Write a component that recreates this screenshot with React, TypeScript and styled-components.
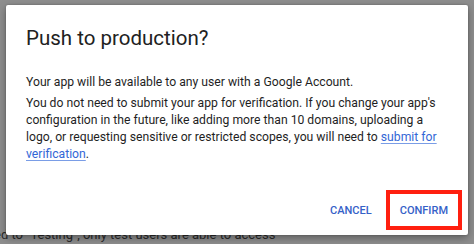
import styled, { createGlobalStyle } from 'styled-components';

const GlobalStyle = createGlobalStyle`
  html, body {
    margin: 0;
    padding: 0;
    background: #8e8e8e;
  }
  body {
    font-family: Roboto, "Liberation Sans", Arial, sans-serif;
  }
`;

const Page = styled.div`
  position: relative;
  width: 474px;
  height: 244px;
  overflow: hidden;
  background: #8e8e8e;
`;

const UnderText = styled.div`
  padding-top: 226px;
  margin-left: -6px;
  font-size: 13px;
  line-height: 17px;
  color: #2a2a2a;
  white-space: nowrap;
`;

const Dialog = styled.div`
  position: absolute;
  top: 5px;
  left: 6px;
  width: 462px;
  height: 230px;
  box-sizing: border-box;
  display: flex;
  flex-direction: column;
  background: #ffffff;
  border-radius: 2px;
  box-shadow: 0 3px 8px rgba(0, 0, 0, 0.35), 0 0 2px rgba(0, 0, 0, 0.25);
`;

const Content = styled.div`
  padding: 20px 20px 0 20px;
`;

const Title = styled.h2`
  margin: 0 0 23px 0;
  font-size: 20.5px;
  line-height: 26px;
  font-weight: 400;
  color: #212121;
`;

const Paragraph = styled.p`
  margin: 0 0 4px 0;
  font-size: 12.2px;
  line-height: 17px;
  color: #1f1f1f;
`;

const Link = styled.a`
  color: #3367d6;
  text-decoration: underline;
  text-decoration-color: #7a9de6;
  text-underline-offset: 2px;
`;

const Actions = styled.div`
  margin-top: auto;
  display: flex;
  justify-content: flex-end;
  align-items: center;
  gap: 6px;
  padding: 0 6px 5px 0;
`;

const Button = styled.button<{ $highlight?: boolean }>`
  height: 40px;
  box-sizing: border-box;
  padding: 0 ${p => (p.$highlight ? '10px' : '8px')};
  border: ${p => (p.$highlight ? '4px solid #ff1f0f' : 'none')};
  background: transparent;
  font-family: Roboto, "Liberation Sans", Arial, sans-serif;
  font-size: 11px;
  font-weight: 500;
  letter-spacing: 0;
  color: #3561c8;
  cursor: pointer;
`;

export default function App() {
  return (
    <>
      <GlobalStyle />
      <Page>
        <UnderText>ed to "Testing", only test users are able to access</UnderText>
        <Dialog>
          <Content>
            <Title>Push to production?</Title>
            <Paragraph>Your app will be available to any user with a Google Account.</Paragraph>
            <Paragraph>
              You do not need to submit your app for verification. If you change your app's
              configuration in the future, like adding more than 10 domains, uploading a
              logo, or requesting sensitive or restricted scopes, you will need to{' '}
              <Link href="#">submit for verification</Link>.
            </Paragraph>
          </Content>
          <Actions>
            <Button>CANCEL</Button>
            <Button $highlight>CONFIRM</Button>
          </Actions>
        </Dialog>
      </Page>
    </>
  );
}
